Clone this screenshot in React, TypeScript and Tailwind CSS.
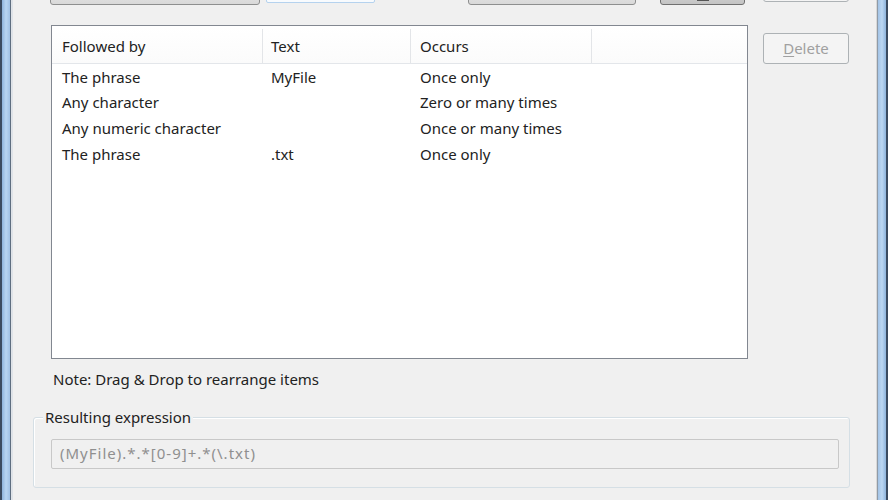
const rows = [
  { kind: "The phrase", text: "MyFile", occurs: "Once only" },
  { kind: "Any character", text: "", occurs: "Zero or many times" },
  { kind: "Any numeric character", text: "", occurs: "Once or many times" },
  { kind: "The phrase", text: ".txt", occurs: "Once only" },
];

const font = { fontFamily: '"Segoe UI", "Noto Sans", "Open Sans", sans-serif' };

function TopControls() {
  // only the bottoms of the upper row of controls are in frame
  return (
    <div className="relative h-[6px] overflow-hidden">
      <div className="absolute bottom-[1px] left-[37px] h-[26px] w-[210px] rounded-[3px] border border-[#8e8f8f] bg-gradient-to-b from-[#f2f2f2] to-[#d9d9d9]" />
      <div className="absolute bottom-[3px] left-[253px] h-[26px] w-[109px] rounded-[2px] border border-[#b5d2ee] bg-[#f8fbfe]" />
      <div className="absolute bottom-[1px] left-[455px] h-[26px] w-[168px] rounded-[3px] border border-[#8e8f8f] bg-gradient-to-b from-[#f2f2f2] to-[#d9d9d9]" />
      <div className="absolute bottom-[1px] left-[647px] h-[26px] w-[85px] rounded-[3px] border border-[#707070] bg-gradient-to-b from-[#e0e0e0] to-[#c4c4c4]">
        <div className="absolute bottom-[3px] left-[36px] h-[2px] w-[12px] bg-[#555]" />
      </div>
      <div className="absolute bottom-[4px] left-[750px] h-[26px] w-[86px] rounded-[3px] border border-[#adb2b5] bg-[#f4f4f4]">
        <div className="absolute bottom-[3px] left-[36px] h-[2px] w-[12px] bg-[#9a9a9a]" />
      </div>
    </div>
  );
}

function ListView() {
  return (
    <div className="h-[334px] w-[697px] border border-[#828790] bg-white">
      <div className="flex h-[38px] border-b border-[#e3e6ea] bg-gradient-to-b from-white to-[#fbfbfb] pt-[3px]">
        <div className="flex w-[211px] items-center border-r border-[#e3e5e8] pl-[10px] text-[#222]">Followed by</div>
        <div className="flex w-[148px] items-center border-r border-[#e3e5e8] pl-[8px] text-[#222]">Text</div>
        <div className="flex w-[181px] items-center border-r border-[#e3e5e8] pl-[9px] text-[#222]">Occurs</div>
        <div className="flex-1" />
      </div>
      <div>
        {rows.map((r, i) => (
          <div key={i} className="flex h-[25.7px] items-center text-[#222]">
            <div className="w-[211px] pl-[10px]">{r.kind}</div>
            <div className="w-[148px] pl-[8px]">{r.text}</div>
            <div className="w-[181px] pl-[9px]">{r.occurs}</div>
          </div>
        ))}
      </div>
    </div>
  );
}

export default function App() {
  return (
    <div className="flex h-[500px] w-[888px] overflow-hidden bg-[#f0f0f0] text-[15px]" style={font}>
      <div className="flex w-[13px] shrink-0">
        <div className="w-[2px] bg-[#3b4b60]" />
        <div className="w-[8px] bg-gradient-to-r from-[#8eb3dc] via-[#b8d5f2] to-[#9fc0e4]" />
        <div className="w-[1px] bg-[#5e6e80]" />
        <div className="w-[2px] bg-[#dfe3e8]" />
      </div>

      <div className="flex flex-1 flex-col">
        <TopControls />

        <div className="mt-[19px] flex gap-[15px] pl-[38px]">
          <ListView />
          <div className="pt-[8px]">
            <button
              disabled
              className="h-[31px] w-[86px] rounded-[3px] border border-[#adb2b5] bg-[#f4f4f4] text-[#a0a0a0]"
            >
              <span className="underline decoration-[#a0a0a0] underline-offset-2">D</span>elete
            </button>
          </div>
        </div>

        <div className="mt-[9px] pl-[40px] text-[#222]">Note: Drag &amp; Drop to rearrange items</div>

        <div className="relative ml-[20px] mt-[26px] h-[71px] w-[817px] rounded-[3px] border border-[#d5dfe5] shadow-[inset_1px_1px_0_#ffffff]">
          <div className="absolute -top-[11px] left-[9px] bg-[#f0f0f0] px-[2px] leading-[20px] text-[#222]">
            Resulting expression
          </div>
          <div className="ml-[17px] mt-[21px] flex h-[30px] w-[788px] items-center rounded-[2px] border border-[#c8c8c8] bg-[#f0f0f0] pl-[8px] tracking-[1px] text-[#8f8f8f]">
            (MyFile).*.*[0-9]+.*(\.txt)
          </div>
        </div>
      </div>

      <div className="flex w-[12px] shrink-0">
        <div className="w-[1px] bg-[#d8d8d8]" />
        <div className="w-[1px] bg-[#8f9aa6]" />
        <div className="w-[8px] bg-gradient-to-r from-[#a2c3e6] via-[#bcd7f2] to-[#8fb4dc]" />
        <div className="w-[2px] bg-[#3b4b60]" />
      </div>
    </div>
  );
}
